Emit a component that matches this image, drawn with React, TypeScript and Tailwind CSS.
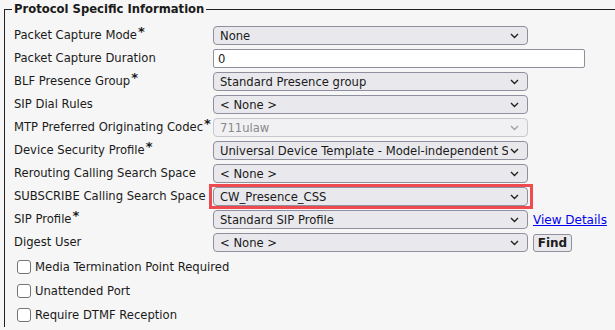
import React from "react";

type Field = {
    label: string;
    required?: boolean;
    kind: "select" | "input" | "disabled";
    value: string;
    highlight?: boolean;
    extra?: "view" | "find";
};

const fields: Field[] = [
    { label: "Packet Capture Mode", required: true, kind: "select", value: "None" },
    { label: "Packet Capture Duration", kind: "input", value: "0" },
    { label: "BLF Presence Group", required: true, kind: "select", value: "Standard Presence group" },
    { label: "SIP Dial Rules", kind: "select", value: "< None >" },
    { label: "MTP Preferred Originating Codec", required: true, kind: "disabled", value: "711ulaw" },
    { label: "Device Security Profile", required: true, kind: "select", value: "Universal Device Template - Model-independent Se" },
    { label: "Rerouting Calling Search Space", kind: "select", value: "< None >" },
    { label: "SUBSCRIBE Calling Search Space", kind: "select", value: "CW_Presence_CSS", highlight: true },
    { label: "SIP Profile", required: true, kind: "select", value: "Standard SIP Profile", extra: "view" },
    { label: "Digest User", kind: "select", value: "< None >", extra: "find" },
];

const checks = ["Media Termination Point Required", "Unattended Port", "Require DTMF Reception"];

function Chevron({ muted }: { muted?: boolean }) {
    return (
        <svg width="9" height="6" viewBox="0 0 9 6" className="shrink-0">
            <path d="M1 1 L4.5 4.5 L8 1" fill="none" stroke={muted ? "#a0a0a8" : "#222"} strokeWidth="1.4" />
        </svg>
    );
}

function Control({ f }: { f: Field }) {
    if (f.kind === "input") {
        return (
            <div className="h-[19px] w-[372px] bg-white border border-[#8f8f9d] rounded-[2px] pl-[4px] flex items-center">
                {f.value}
            </div>
        );
    }
    const disabled = f.kind === "disabled";
    const select = (
        <div
            className={
                disabled
                    ? "h-[19px] w-[315px] bg-[#f1f1f3] border border-[#c8c8ce] rounded-[4px] pl-[6px] pr-[8px] flex items-center gap-[2px] text-[#8a8a8a]"
                    : "h-[19px] w-[315px] bg-[#e9e9ed] border border-[#8f8f9d] rounded-[4px] pl-[6px] pr-[8px] flex items-center gap-[2px]"
            }
        >
            <span className="flex-1 overflow-hidden whitespace-nowrap">{f.value}</span>
            <Chevron muted={disabled} />
        </div>
    );
    if (f.highlight) {
        return (
            <div className="-ml-[4px] border-[3px] border-[#ef4a4f] pl-[1px] pr-[2px]">{select}</div>
        );
    }
    return select;
}

export default function App() {
    return (
        <div className="w-[615px] h-[330px] overflow-hidden bg-[#f6f6f6] text-[#1a1a1a] text-[11.6px] leading-[14px] font-['DejaVu_Sans',Verdana,sans-serif]">
            <fieldset className="ml-[4px] w-[660px] border-t border-l border-[#222] pt-[6px]">
                <legend className="ml-[7px] px-[2px] font-bold text-[11.6px] leading-[18px]">Protocol Specific Information</legend>

                <div className="pl-[9px] flex flex-col">
                    {fields.map((f) => (
                        <div key={f.label} className="h-[23px] flex items-center">
                            <div className="w-[199px] whitespace-nowrap -mt-[2px]">
                                {f.label}
                                {f.required && <sup className="text-[13px] font-bold ml-[1px] top-[-3px]">*</sup>}
                            </div>
                            <Control f={f} />
                            {f.extra === "view" && (
                                <a href="#" className="ml-[5px] text-[#0000ee] underline text-[12px]">View Details</a>
                            )}
                            {f.extra === "find" && (
                                <button className="ml-[5px] h-[18px] w-[39px] bg-[#e9e9ed] border border-[#8f8f9d] rounded-[3px] font-bold text-[12px] leading-[14px]">
                                    Find
                                </button>
                            )}
                        </div>
                    ))}
                </div>

                <div className="pl-[12px] pt-[1px] flex flex-col">
                    {checks.map((c) => (
                        <label key={c} className="h-[24px] flex items-center gap-[4px]">
                            <span className="w-[14px] h-[14px] bg-white border border-[#767676] rounded-[3px]" />
                            <span>{c}</span>
                        </label>
                    ))}
                </div>
            </fieldset>
        </div>
    );
}
